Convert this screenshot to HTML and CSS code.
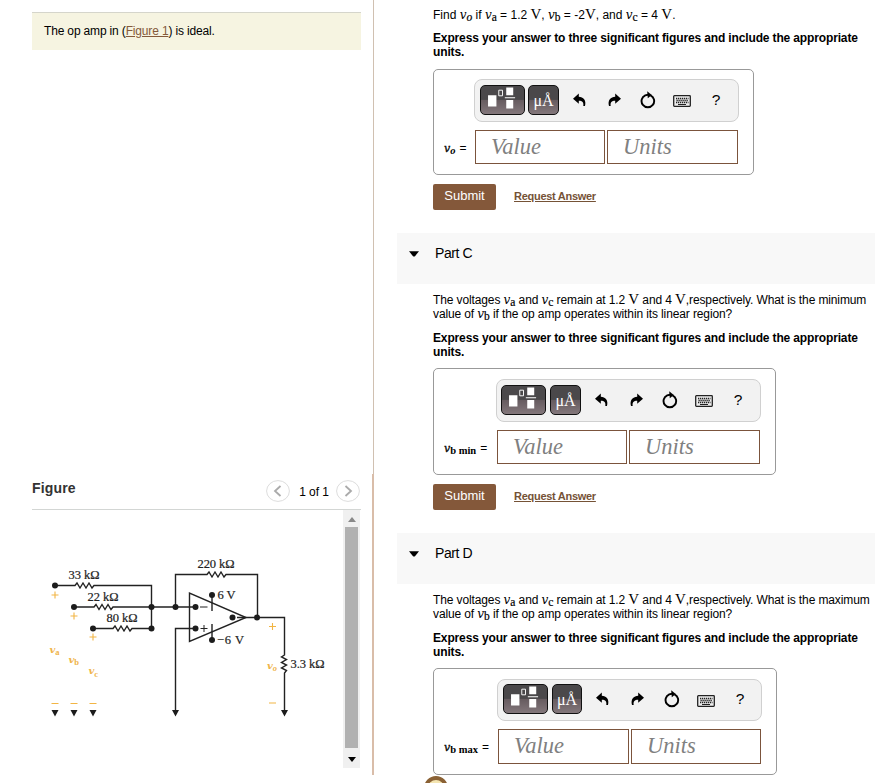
FILE: index.html
```
<!DOCTYPE html>
<html lang="en">
<head>
<meta charset="utf-8">
<title>Op amp problem</title>
<link rel="stylesheet" href="styles.css">
</head>
<body>
<svg class="defs" aria-hidden="true">
  <symbol id="undo" viewBox="0 0 14 14"><path d="M0 5.7 5.8 0.6V3.7C10.3 3.7 13.6 7.2 12 13H10.3C10.9 9.4 9.4 7.7 5.8 7.7V10.8Z"/></symbol>
  <symbol id="reset" viewBox="0 0 16 18"><path d="M10.5 4.300A6.300 6.300 0 1 1 5.200 4.300L9 3.500" fill="none" stroke="#000" stroke-width="1.900"/><path d="M7.200 .3 11.800 4 7.800 7.300Z"/></symbol>
  <symbol id="keys" viewBox="0 0 18 12"><rect x=".7" y=".7" width="16.6" height="10.6" rx=".7" fill="#eee" stroke="#222" stroke-width="1.3"/><path d="M3 3.500H15.500M3.500 5.500H15M3 7.500H15.500" stroke="#222" stroke-width="1.300" stroke-dasharray="1.300 .7"/><path d="M5 9.500H13" stroke="#222"/></symbol>
  <symbol id="tmpl" viewBox="0 0 45 30"><g fill="#fff"><path d="M7 10H16V22H7ZM26.500 1.500H34V10H26.500ZM26.500 15H34V24H26.500Z"/><path d="M25 12H36V13.200H25Z"/></g><path d="M18.500 4.500H22.500V10.500H18.500Z" fill="none" stroke="#fff"/></symbol>
  <symbol id="caret" viewBox="0 0 10 6"><path d="M0 .3H10L6 5.2Q5 6 4 5.2Z"/></symbol>
</svg>
<div class="page">
  <aside class="left">
    <div class="intro">The op amp in (<a>Figure 1</a>) is ideal.</div>
    <div class="fighead">
      <h2>Figure</h2>
      <svg class="nav" viewBox="0 0 24 22"><ellipse cx="12" cy="11" rx="11.4" ry="10.4"/><path d="M14.5 6 9 11l5.5 5"/></svg>
      <span class="count">1 of 1</span>
      <svg class="nav" viewBox="0 0 24 22"><ellipse cx="12" cy="11" rx="11.4" ry="10.4"/><path d="M9.5 6 15 11l-5.5 5"/></svg>
    </div>
    <div class="figbody">
      <svg class="circuit" viewBox="32 510 311 258">
        <g class="wire">
          <path d="M55 585.5H75l2-2.5 3 5 3-5 3 5 3-5 3 5 2-2.500H151.500V628"/>
          <path d="M74 607H94l2-2.500 3 5 3-5 3 5 3-5 3 5 2-2.500H196"/>
          <path d="M93 628.500H113l2-2.500 3 5 3-5 3 5 3-5 3 5 2-2.500H151"/>
          <path d="M175.500 607V574.500H207l2-2.500 3 5 3-5 3 5 3-5 3 5 2-2.500H257.500V617"/>
          <path d="M189.500 593V641.500L246 617.500Z"/>
          <path d="M212 595V611M212 624V640M237 617.500H284.500V655l-3 2 5 2.500-5 3 5 2.500-5 3 5 2.500-2 2.500V711M196 628.500H175.500V711"/>
        </g>
        <g class="sym"><path d="M200 607H207.500M200.500 628.500H207.500M204 625V632"/></g>
        <g class="dot"><circle cx="55" cy="585.500" r="3"/><circle cx="74" cy="607" r="3"/><circle cx="93" cy="628.500" r="3"/><circle cx="151.500" cy="607" r="3"/><circle cx="151.500" cy="628.500" r="3"/><circle cx="175.500" cy="607" r="3"/><circle cx="195.500" cy="607" r="3"/><circle cx="195.500" cy="628.500" r="3"/><circle cx="212" cy="595" r="3"/><circle cx="212" cy="640" r="3"/><circle cx="232.500" cy="617.500" r="3"/><circle cx="257" cy="617.500" r="3"/>
          <path d="M51.500 710H58.500L55 716.500ZM70.500 710H77.500L74 716.500ZM89.500 710H96.500L93 716.500ZM172 710H179L175.500 716.500ZM281 710H288L284.500 716.500Z"/></g>
        <g class="pol"><path d="M51.500 595H58.500M55 591.500V598.500M70.500 616H77.500M74 612.500V619.500M89.500 637H96.500M93 633.500V640.500M269 626.500H276M272.500 623V630M51.500 703.500H58.500M70.500 703.500H77.500M89.500 703.500H96.500M269 703H276"/></g>
        <g class="lab">
          <text x="68.500" y="579" textLength="31">33 kΩ</text><text x="87.500" y="600.500" textLength="31">22 kΩ</text><text x="106.500" y="622" textLength="31">80 kΩ</text><text x="197.500" y="568" textLength="37">220 kΩ</text><text x="217.500" y="598.500" textLength="18">6 V</text><text x="217" y="643.500" textLength="27">−6 V</text><text x="290.500" y="668" textLength="34">3.3 kΩ</text>
        </g>
        <g class="volt"><text x="49.500" y="652.500">v<tspan class="s" dy="2.500">a</tspan></text><text x="68.500" y="663">v<tspan class="s" dy="2">b</tspan></text><text x="88.500" y="674">v<tspan class="s" dy="2.500">c</tspan></text><text x="267" y="668.500">v<tspan class="s i" dy="2.500">o</tspan></text></g>
      </svg>
      <div class="scroll"><svg viewBox="0 0 8 5"><path d="M4 0 8 5H0Z" fill="#888"/></svg><div class="thumb"></div><svg viewBox="0 0 8 5"><path d="M0 0H8L4 5Z"/></svg></div>
    </div>
  </aside>
  <div class="rule"><i></i><b></b></div>
  <main class="right">
    <section class="part first">
      <p class="q q1">Find <var>v<sub class="i">o</sub></var> if <var>v<sub>a</sub></var> = 1.2 <span class="u">V</span>, <var>v<sub>b</sub></var> = -2<span class="u">V</span>, and <var>v<sub>c</sub></var> = 4 <span class="u">V</span>.</p>
      <p class="req">Express your answer to three significant figures and include the appropriate<br>units.</p>
      <div class="answer a1">
        <div class="tools"><svg class="btn tmpl"><use href="#tmpl"/></svg><span class="btn mu">μÅ</span><svg class="undo"><use href="#undo"/></svg><svg class="undo redo"><use href="#undo"/></svg><svg class="reset"><use href="#reset"/></svg><svg class="keys"><use href="#keys"/></svg><span class="help">?</span></div>
        <div class="label"><var>v<sub class="i">o</sub></var> <span>=</span></div><div class="field">Value</div><div class="field">Units</div>
      </div>
      <div class="actions"><span class="submit">Submit</span><a class="request">Request Answer</a></div>
    </section>
    <header class="parthead"><svg><use href="#caret"/></svg><span>Part C</span></header>
    <section class="part">
      <p class="q"><span class="l1">The voltages <var>v<sub>a</sub></var> and <var>v<sub>c</sub></var> remain at 1.2 <span class="u">V</span> and 4 <span class="u">V</span>,respectively. What is the minimum</span><br><span class="l2">value of <var>v<sub>b</sub></var> if the op amp operates within its linear region?</span></p>
      <p class="req">Express your answer to three significant figures and include the appropriate<br>units.</p>
      <div class="answer a2">
        <div class="tools"><svg class="btn tmpl"><use href="#tmpl"/></svg><span class="btn mu">μÅ</span><svg class="undo"><use href="#undo"/></svg><svg class="undo redo"><use href="#undo"/></svg><svg class="reset"><use href="#reset"/></svg><svg class="keys"><use href="#keys"/></svg><span class="help">?</span></div>
        <div class="label"><var>v<sub>b min</sub></var> <span>=</span></div><div class="field">Value</div><div class="field">Units</div>
      </div>
      <div class="actions"><span class="submit">Submit</span><a class="request">Request Answer</a></div>
    </section>
    <header class="parthead"><svg><use href="#caret"/></svg><span>Part D</span></header>
    <section class="part">
      <p class="q"><span class="l1">The voltages <var>v<sub>a</sub></var> and <var>v<sub>c</sub></var> remain at 1.2 <span class="u">V</span> and 4 <span class="u">V</span>,respectively. What is the maximum</span><br><span class="l2">value of <var>v<sub>b</sub></var> if the op amp operates within its linear region?</span></p>
      <p class="req">Express your answer to three significant figures and include the appropriate<br>units.</p>
      <div class="answer a3">
        <div class="tools"><svg class="btn tmpl"><use href="#tmpl"/></svg><span class="btn mu">μÅ</span><svg class="undo"><use href="#undo"/></svg><svg class="undo redo"><use href="#undo"/></svg><svg class="reset"><use href="#reset"/></svg><svg class="keys"><use href="#keys"/></svg><span class="help">?</span></div>
        <div class="label"><var>v<sub>b max</sub></var> <span>=</span></div><div class="field">Value</div><div class="field">Units</div>
      </div>
    </section>
    <div class="badge"></div>
  </main>
</div>
</body>
</html>
```
FILE: styles.css
```
* { box-sizing: border-box; }
html, body { margin: 0; height: 783px; overflow: hidden; background: #fff; }
body { font: 12px/14px "Liberation Sans", sans-serif; color: #000; }
.defs { position: absolute; width: 0; height: 0; }
svg { display: block; flex: none; }
.page { display: flex; width: 889px; height: 783px; overflow: hidden; }
.left { width: 361px; padding: 12px 0 0 32px; flex: none; }
.intro { width: 329px; height: 38px; border-top: 1px solid #d5d5cb; background: #f6f4e1; padding: 11px 0 0 12px; letter-spacing: -.16px; }
.intro a { color: #84593a; text-decoration: underline; }
.fighead { display: flex; margin-top: 424px; height: 36px; width: 329px; border-bottom: 1px solid #d3d6d4; }
.fighead h2 { margin: 6px 0 0; width: 234px; font-size: 14px; line-height: 16px; color: #333; letter-spacing: .15px; }
.nav { width: 24px; height: 22px; margin-top: 6px; fill: none; stroke: #ddd; stroke-width: 1; }
.nav path { stroke: #aaa; stroke-width: 1.8; }
.count { width: 47px; padding-left: 1px; margin-right: -1px; text-align: center; margin-top: 11px; white-space: nowrap; letter-spacing: -.1px; }
.figbody { display: flex; width: 329px; height: 258px; }
.circuit { width: 311px; height: 258px; }
.wire, .sym { fill: none; stroke: #222; stroke-width: 1.4; }
.sym { stroke-width: 1; }
.dot { fill: #1c1c1c; }
.pol { fill: none; stroke: #f2b544; stroke-width: 1.1; }
.lab { font: 12.5px "Liberation Serif", serif; fill: #222; stroke: #222; stroke-width: .2px; }
.volt { font: italic bold 10px "DejaVu Serif", serif; fill: #efb44a; }
.volt .s { font: bold 8.5px "Liberation Serif", serif; }
.volt .i { font-style: italic; }
.scroll { width: 17px; height: 258px; background: #f0f0f0; display: flex; flex-direction: column; align-items: center; padding-top: 7px; }
.scroll svg { width: 8px; height: 5px; }
.thumb { width: 13px; height: 221px; background: #b1b1b1; margin: 5px 0 9px; }
.rule { width: 14px; flex: none; height: 775px; padding-left: 11px; display: flex; flex-direction: column; }
.rule i { height: 474px; width: 1px; background: #d0c0b1; margin-left: 1px; }
.rule b { height: 301px; width: 2px; background: #d9bda9; }
.right { position: relative; width: 500px; padding-left: 22px; flex: none; }
.part { padding: 9px 0 0 36px; height: 249px; }
.part.first { height: 233px; padding-top: 8px; }
.q, .req { margin: 0; white-space: nowrap; }
.q { height: 29px; line-height: 14px; }
.q1 { height: 23px; }
.l1, .l2 { display: inline-block; height: 14px; letter-spacing: -.12px; }
.req { font-weight: bold; height: 37px; margin-top: 9px; letter-spacing: -.14px; }
.first .req { margin-top: 0; height: 38px; }
var { font: italic 12px/10px "DejaVu Serif", serif; letter-spacing: 0; }
sub { font: 11.5px/1px "Liberation Serif", serif; vertical-align: -2px; -webkit-text-stroke: .2px #000; }
sub.i { font-style: italic; }
.u { font: 15px/10px "Liberation Serif", serif; letter-spacing: 0; }
.answer { display: grid; grid-template-columns: 41px 130px 131px; justify-content: start; grid-template-rows: 43px 34px; row-gap: 8px; width: 321px; height: 106px; border: 1px solid #999; border-radius: 5px; padding-top: 9px; }
.a2 { grid-template-columns: 63px 130px 131px; width: 343px; height: 107px; padding-top: 10px; }
.a3 { grid-template-columns: 64px 131px 130px; grid-template-rows: 42px 35px; width: 344px; height: 107px; padding-top: 10px; }
.tools { grid-column: 2 / 4; width: 265px; height: 43px; margin-left: -1px; border: 1px solid #d0d0d0; border-radius: 8px; background: #f2f2f2; display: flex; align-items: center; padding: 0 0 2px 5px; }
.a2 .tools { padding-left: 4px; }
.a3 .tools { height: 42px; }
.btn { width: 45px; height: 30px; border: 1px solid #111; border-radius: 5px; background: linear-gradient(#4a484a 0 48%, #665b5f 50%, #83777b); flex: none; }
.mu { width: 31px; margin-left: 3px; color: #fff; font: 16px/29px "Liberation Serif", serif; text-align: center; }
.a2 .mu { margin-left: 4px; }
.a3 .mu { margin-left: 4px; width: 30px; }
.undo { width: 14px; height: 14px; margin-left: 14px; }
.redo { margin-left: 20px; transform: scaleX(-1); }
.reset { width: 16px; height: 18px; margin-left: 19px; }
.a3 .reset { margin-left: 20px; }
.keys { width: 18px; height: 12px; margin: 3px 0 0 17px; }
.help { width: 16px; margin-left: 17px; font-size: 15.5px; text-align: center; }
.label { padding: 11px 0 0 10px; white-space: nowrap; font-size: 11px; }
.label var { font-size: 11px; -webkit-text-stroke: .3px #000; }
.label sub { font-size: 10.5px; font-weight: bold; -webkit-text-stroke: 0; }
.label span { font-size: 12px; margin-left: 1px; }
.field { border: 1px solid #7b543c; padding-left: 15px; font: italic 22.5px/32px "Liberation Serif", serif; color: #808080; }
.field + .field { margin-left: 2px; margin-right: -2px; }
.actions { display: flex; margin-top: 9px; height: 26px; }
.submit { width: 63px; height: 26px; background: #84583a; color: #fff; border-radius: 2px; font-size: 13px; line-height: 24px; text-align: center; }
.request { margin: 5px 0 0 18px; color: #755236; font-weight: bold; font-size: 11px; letter-spacing: -.28px; text-decoration: underline; white-space: nowrap; }
.parthead { width: 478px; height: 51px; background: #f8f8f8; display: flex; padding: 12px 0 0 12px; font-size: 14px; line-height: 16px; letter-spacing: -.4px; }
.parthead svg { width: 10px; height: 6px; margin: 6px 16px 0 0; }
.badge { position: absolute; left: 49px; top: 776px; width: 24px; height: 24px; border-radius: 50%; border: 4px solid #8a6134; background: #f4e5b1; }
```
